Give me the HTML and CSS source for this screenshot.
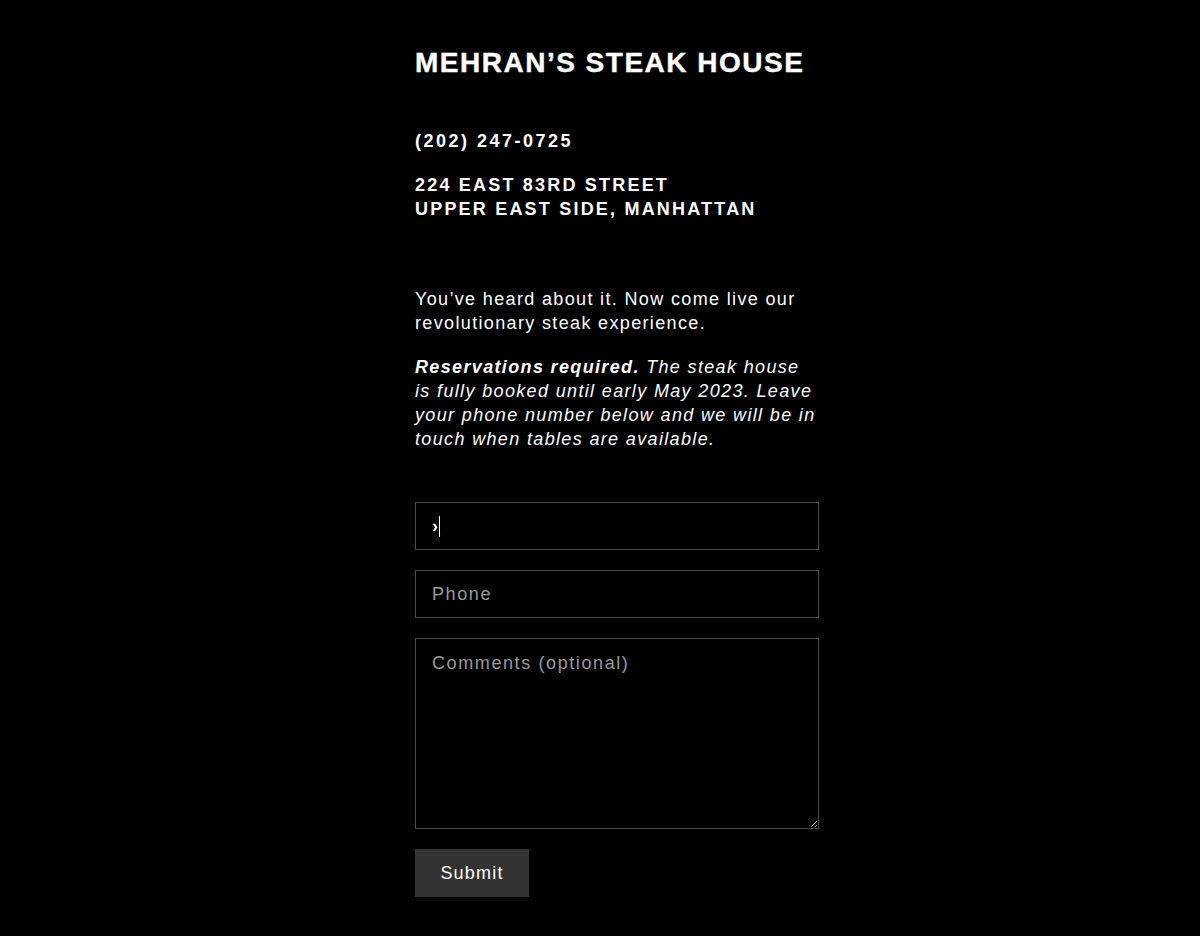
FILE: index.html
```html
<!DOCTYPE html>
<html>
<head>
<meta charset="utf-8">
<link rel="stylesheet" href="styles.css">
</head>
<body>
<main class="page">
  <h1 class="title">MEHRAN’S STEAK HOUSE</h1>
  <p class="contact phone">(202) 247-0725</p>
  <p class="contact address">224 EAST 83RD STREET<br>UPPER EAST SIDE, MANHATTAN</p>
  <p class="intro">You’ve heard about it. Now come live our revolutionary steak experience.</p>
  <p class="note"><strong>Reservations required.</strong> The steak house is fully booked until early May 2023. Leave your phone number below and we will be in touch when tables are available.</p>
  <form class="form">
    <div class="field">
      <input class="input input-name" type="text" value="›">
      <span class="caret"></span>
    </div>
    <input class="input" type="text" placeholder="Phone">
    <textarea class="input textarea" placeholder="Comments (optional)"></textarea>
    <button class="submit" type="button">Submit</button>
  </form>
</main>
</body>
</html>
```
FILE: styles.css
```css
html, body {
  margin: 0;
  padding: 0;
  background: #000;
}
body {
  color: #fff;
  font-family: "Liberation Sans", Arial, sans-serif;
  font-size: 18px;
  line-height: 24px;
  letter-spacing: 1.35px;
}
.page {
  width: 406px;
  margin-left: 415px;
  padding-top: 46px;
  padding-bottom: 40px;
}
.title {
  margin: 0 0 49px;
  font-size: 28px;
  line-height: 34px;
  font-weight: 700;
  letter-spacing: 1.5px;
  -webkit-text-stroke: 0.4px #fff;
}
.contact {
  margin: 0;
  font-weight: 700;
  letter-spacing: 2.2px;
}
.phone {
  margin-bottom: 20px;
  letter-spacing: 2.5px;
}
.address {
  margin-bottom: 66px;
}
.intro {
  margin: 0 0 20px;
}
.note {
  margin: 0 0 51px;
  font-style: italic;
}
.note strong {
  font-weight: 700;
}
.form {
  display: flex;
  flex-direction: column;
  gap: 20px;
  align-items: flex-start;
  width: 404px;
}
.field {
  position: relative;
  width: 100%;
}
.input {
  display: block;
  box-sizing: border-box;
  width: 100%;
  height: 48px;
  margin: 0;
  padding: 12px 16px;
  background: #000;
  border: 1px solid #4a4a4a;
  border-radius: 0;
  color: #fff;
  font-family: "Liberation Sans", Arial, sans-serif;
  font-size: 18px;
  line-height: 24px;
  letter-spacing: 1.6px;
  outline: none;
}
.input-name {
  font-weight: 700;
}
.input::placeholder {
  color: #9a9a9a;
  opacity: 1;
  font-weight: 400;
}
.textarea {
  height: 191px;
  resize: vertical;
}
.caret {
  position: absolute;
  left: 24px;
  top: 14px;
  width: 1px;
  height: 21px;
  background: #fff;
}
.submit {
  width: 114px;
  height: 48px;
  padding: 0;
  background: #333;
  border: none;
  border-radius: 0;
  color: #fff;
  font-family: "Liberation Sans", Arial, sans-serif;
  font-size: 18px;
  letter-spacing: 1.2px;
}
```
